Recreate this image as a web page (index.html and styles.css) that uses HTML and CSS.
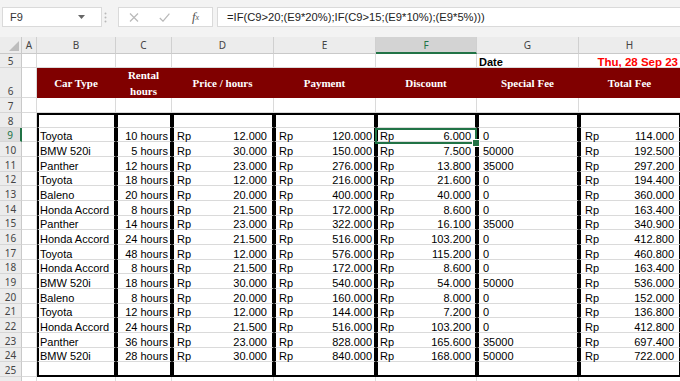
FILE: index.html
```html
<!DOCTYPE html>
<html lang="en">
<head>
    <meta charset="UTF-8">
    <meta name="viewport" content="width=device-width, initial-scale=1.0">
    <title>Car Rental</title>
    <link rel="stylesheet" href="styles.css">
</head>
<body>
    <div class="toolbar">
        <div class="name-box">
            <span>F9</span>
            <svg class="caret" width="7" height="4" viewBox="0 0 7 4"><path d="M0 0h7L3.5 4z" fill="#666"/></svg>
        </div>
        <div class="grip">
            <svg width="3" height="11" viewBox="0 0 3 11">
                <circle cx="1.5" cy="1.5" r="1" fill="#b8b8b8"/>
                <circle cx="1.5" cy="5.5" r="1" fill="#b8b8b8"/>
                <circle cx="1.5" cy="9.5" r="1" fill="#b8b8b8"/>
            </svg>
        </div>
        <div class="fx-box">
            <span class="fx-btn"><svg width="10" height="9" viewBox="0 0 10 9"><path d="M1 0.5L9 8.5M9 0.5L1 8.5" stroke="#b9b9b9" stroke-width="1.2"/></svg></span>
            <span class="fx-btn"><svg width="11" height="9" viewBox="0 0 11 9"><path d="M0.8 5L4 8.2L10.4 0.6" stroke="#b9b9b9" stroke-width="1.2" fill="none"/></svg></span>
            <span class="fx-btn fx">f<sub>x</sub></span>
        </div>
        <div class="formula">=IF(C9&gt;20;(E9*20%);IF(C9&gt;15;(E9*10%);(E9*5%)))</div>
    </div>

    <div class="sheet">
        <div class="corner"><svg width="10" height="10" viewBox="0 0 10 10"><path d="M10 0V10H0z" fill="#bdbdbd"/></svg></div>
        <div class="ch">A</div>
        <div class="ch">B</div>
        <div class="ch">C</div>
        <div class="ch">D</div>
        <div class="ch">E</div>
        <div class="ch active">F</div>
        <div class="ch">G</div>
        <div class="ch">H</div>

        <!-- row 5 -->
        <div class="rh">5</div>
        <div class="cell"></div>
        <div class="cell"></div>
        <div class="cell"></div>
        <div class="cell"></div>
        <div class="cell"></div>
        <div class="cell"></div>
        <div class="cell date-label">Date</div>
        <div class="cell date-value">Thu, 28 Sep 23</div>

        <!-- row 6 : table header -->
        <div class="rh">6</div>
        <div class="cell"></div>
        <div class="cell band">Car Type</div>
        <div class="cell band">Rental<br>hours</div>
        <div class="cell band">Price / hours</div>
        <div class="cell band">Payment</div>
        <div class="cell band">Discount</div>
        <div class="cell band">Special Fee</div>
        <div class="cell band">Total Fee</div>

        <!-- row 7 -->
        <div class="rh">7</div>
        <div class="cell"></div>
        <div class="cell"></div>
        <div class="cell"></div>
        <div class="cell"></div>
        <div class="cell"></div>
        <div class="cell"></div>
        <div class="cell"></div>
        <div class="cell"></div>
    </div>

    <script>
        const rentals = [
            ['Toyota', '10 hours', '12.000', '120.000', '6.000', '0', '114.000'],
            ['BMW 520i', '5 hours', '30.000', '150.000', '7.500', '50000', '192.500'],
            ['Panther', '12 hours', '23.000', '276.000', '13.800', '35000', '297.200'],
            ['Toyota', '18 hours', '12.000', '216.000', '21.600', '0', '194.400'],
            ['Baleno', '20 hours', '20.000', '400.000', '40.000', '0', '360.000'],
            ['Honda Accord', '8 hours', '21.500', '172.000', '8.600', '0', '163.400'],
            ['Panther', '14 hours', '23.000', '322.000', '16.100', '35000', '340.900'],
            ['Honda Accord', '24 hours', '21.500', '516.000', '103.200', '0', '412.800'],
            ['Toyota', '48 hours', '12.000', '576.000', '115.200', '0', '460.800'],
            ['Honda Accord', '8 hours', '21.500', '172.000', '8.600', '0', '163.400'],
            ['BMW 520i', '18 hours', '30.000', '540.000', '54.000', '50000', '536.000'],
            ['Baleno', '8 hours', '20.000', '160.000', '8.000', '0', '152.000'],
            ['Toyota', '12 hours', '12.000', '144.000', '7.200', '0', '136.800'],
            ['Honda Accord', '24 hours', '21.500', '516.000', '103.200', '0', '412.800'],
            ['Panther', '36 hours', '23.000', '828.000', '165.600', '35000', '697.400'],
            ['BMW 520i', '28 hours', '30.000', '840.000', '168.000', '50000', '722.000']
        ];

        const sheet = document.querySelector('.sheet');
        const money = (v) => `<span>Rp</span><span>${v}</span>`;
        let html = '';

        // rows 8 - 26, rows 8 to 25 sit inside the black column boxes
        for (let r = 8; r <= 26; r++) {
            const item = rentals[r - 9];
            let edge = '';
            if (r <= 25) {
                edge = ' edge';
                if (r === 8) edge += ' top';
                if (r === 25) edge += ' bottom';
            }
            // row 26 is only a sliver at the bottom of the window
            const label = r === 26 ? '' : r;
            html += `<div class="rh${r === 9 ? ' active' : ''}">${label}</div>`;
            html += '<div class="cell"></div>';
            if (item) {
                html += `<div class="cell col-b${edge}">${item[0]}</div>`;
                html += `<div class="cell col-c${edge}">${item[1]}</div>`;
                html += `<div class="cell col-d${edge}">${money(item[2])}</div>`;
                html += `<div class="cell col-e${edge}">${money(item[3])}</div>`;
                html += `<div class="cell col-f${edge}${r === 9 ? ' sel' : ''}">${money(item[4])}</div>`;
                html += `<div class="cell col-g${edge}">${item[5]}</div>`;
                html += `<div class="cell col-h${edge}">${money(item[6])}</div>`;
            } else {
                ['b', 'c', 'd', 'e', 'f', 'g', 'h'].forEach((c) => {
                    html += `<div class="cell col-${c}${edge}"></div>`;
                });
            }
        }
        sheet.insertAdjacentHTML('beforeend', html);
    </script>
</body>
</html>
```

FILE: styles.css
```css
* {
    box-sizing: border-box;
}

body {
    margin: 0;
    width: 680px;
    height: 381px;
    overflow: hidden;
    background-color: #fff;
    font-family: "Liberation Sans", Arial, sans-serif;
    font-size: 11px;
    color: #000;
}

/* formula bar */
.toolbar {
    height: 37px;
    padding-top: 7px;
    display: flex;
    align-items: flex-start;
    background-color: #f3f3f3;
}

.name-box {
    margin-left: 2px;
    width: 100px;
    height: 20px;
    padding-left: 7px;
    display: flex;
    align-items: center;
    background-color: #fff;
    border: 1px solid #dadada;
    color: #333;
}

.caret {
    margin-left: auto;
    margin-right: 16px;
}

.grip {
    width: 16px;
    height: 20px;
    padding-left: 2px;
    display: flex;
    align-items: center;
}

.fx-box {
    width: 95px;
    height: 20px;
    display: flex;
    background-color: #fff;
    border: 1px solid #dadada;
}

.fx-btn {
    width: 30px;
    display: flex;
    align-items: center;
    justify-content: center;
}

.fx-btn.fx {
    width: 33px;
    font-family: "Liberation Serif", serif;
    font-style: italic;
    font-size: 13px;
    color: #555;
}

.fx sub {
    font-size: 8px;
}

.formula {
    flex: 1;
    margin-left: 4px;
    height: 20px;
    padding-left: 9px;
    line-height: 18px;
    font-size: 11.2px;
    background-color: #fff;
    border: 1px solid #dadada;
    border-right: none;
    color: #222;
    white-space: nowrap;
}

/* worksheet */
.sheet {
    display: grid;
    grid-template-columns: 22px 15px 79px 56px 102px 102px 101px 102px 102px;
    grid-template-rows: 17px 14px 30px 15px repeat(18, 14.67px) 20px;
}

.corner,
.ch,
.rh {
    background-color: #ececec;
    font-family: "Noto Sans", sans-serif;
    font-size: 10px;
    color: #444;
}

.corner {
    padding: 0 2px 2px 0;
    display: flex;
    align-items: flex-end;
    justify-content: flex-end;
    border-right: 1px solid #c9c9c9;
    border-bottom: 1px solid #c9c9c9;
}

.ch {
    display: flex;
    align-items: center;
    justify-content: center;
    border-right: 1px solid #d0d0d0;
    border-bottom: 1px solid #c9c9c9;
}

.ch.active {
    background-color: #d3d3d3;
    color: #217346;
    border-bottom: 2px solid #217346;
}

.rh {
    display: flex;
    align-items: flex-end;
    justify-content: center;
    line-height: 12px;
    border-right: 1px solid #c9c9c9;
    border-bottom: 1px solid #d6d6d6;
}

.rh.active {
    background-color: #dedede;
    color: #217346;
    border-right: 2px solid #217346;
}

.cell {
    display: flex;
    align-items: flex-end;
    line-height: 9px;
    white-space: nowrap;
    border-right: 1px solid #dadada;
    border-bottom: 1px solid #dadada;
}

.col-b {
    padding-left: 1px;
}

.col-c {
    justify-content: flex-end;
    padding-right: 2px;
}

.col-d,
.col-e,
.col-f,
.col-h {
    justify-content: space-between;
}

.col-d {
    padding: 0 5px 0 3px;
}

.col-e {
    padding: 0 2px 0 3px;
}

.col-f {
    padding: 0 4px 0 2px;
}

.col-g {
    padding-left: 4px;
}

.col-h {
    padding: 0 5px 0 4px;
}

.edge {
    border-left: 2px solid #000;
    border-right: 2px solid #000;
}

.edge.top {
    border-top: 2px solid #000;
}

.edge.bottom {
    border-bottom: 2px solid #000;
}

.band {
    padding: 0;
    align-items: center;
    justify-content: center;
    text-align: center;
    line-height: 16px;
    background-color: #800000;
    border-color: #800000;
    color: #fff;
    font-family: "Liberation Serif", serif;
    font-weight: bold;
}

.date-label {
    padding-left: 2px;
    font-weight: bold;
}

.date-value {
    justify-content: flex-end;
    padding-right: 2px;
    font-size: 11.5px;
    font-weight: bold;
    color: #ff0000;
}

/* selected cell F9 */
.sel {
    position: relative;
}

.sel::after {
    content: '';
    position: absolute;
    top: 0;
    left: -3px;
    right: -2px;
    bottom: -3px;
    border: 2px solid #217346;
}

.sel::before {
    content: '';
    position: absolute;
    right: -5px;
    bottom: -6px;
    width: 6px;
    height: 6px;
    background-color: #217346;
    border: 1px solid #fff;
    z-index: 1;
}
```
